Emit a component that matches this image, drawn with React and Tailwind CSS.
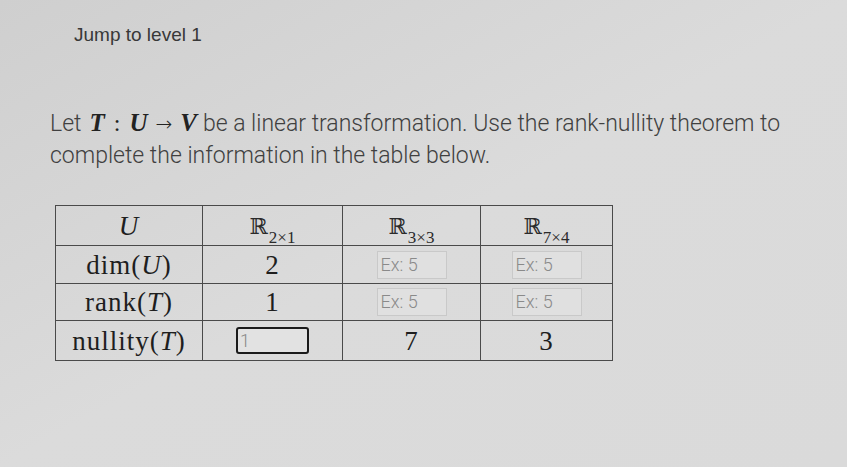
import React from "react";

const serif = "font-['Liberation_Serif',serif]";

function RR({ sub }) {
  return (
    <span className="font-['DejaVu_Serif',serif] text-[22px] text-[#2a2a2a]">
      ℝ<sub className="text-[17px] align-[-5px] tracking-normal font-['Liberation_Serif',serif]">{sub}</sub>
    </span>
  );
}

function Placeholder() {
  return (
    <div className="w-[70px] h-[28px] mx-auto border border-[#c9c9c9] bg-[#e0e0e0] flex items-center px-[3px] text-[18px] tracking-normal text-[#8a8a8a] font-['Roboto',sans-serif] font-light">
      Ex: 5
    </div>
  );
}

export default function App() {
  const cell = "border border-[#4a4a4a] text-center align-middle p-0";
  return (
    <div className="w-[847px] h-[467px] overflow-hidden bg-gradient-to-br from-[#cfcfcf] via-[#dbdbdb] to-[#dadada] text-[#3a3a3a]">
      <div className="pt-[21px] pl-[74px] text-[19px] leading-[28px] font-['Liberation_Sans',sans-serif] text-[#383838]">
        Jump to level 1
      </div>

      <p className="mt-[59px] ml-[50px] w-[780px] text-[23px] leading-[32px] font-['Roboto',sans-serif] font-light text-[#404040]">
        Let
        <span className={`${serif} italic font-bold text-[25px] leading-none text-[#222] ml-[8px]`}>T</span>
        <span className={`${serif} text-[24px] leading-none text-[#222] mx-[9px]`}>:</span>
        <span className={`${serif} italic font-bold text-[25px] leading-none text-[#222]`}>U</span>
        <span className="font-['DejaVu_Sans',sans-serif] text-[20px] leading-none text-[#222] mx-[8px]">→</span>
        <span className={`${serif} italic font-bold text-[25px] leading-none text-[#222] mr-[6px]`}>V</span>
        be a linear transformation. Use the rank-nullity theorem to
        <br />
        complete the information in the table below.
      </p>

      <table className={`mt-[33px] ml-[55px] border-collapse ${serif} text-[27px] leading-[28px] tracking-[1px] text-[#1e1e1e]`}>
        <tbody>
          <tr className="h-[40px]">
            <td className={`${cell} w-[147px] italic`}>U</td>
            <td className={`${cell} w-[140px]`}><RR sub="2×1" /></td>
            <td className={`${cell} w-[138px]`}><RR sub="3×3" /></td>
            <td className={`${cell} w-[132px]`}><RR sub="7×4" /></td>
          </tr>
          <tr className="h-[38px]">
            <td className={cell}>dim(<span className="italic">U</span>)</td>
            <td className={cell}>2</td>
            <td className={cell}><Placeholder /></td>
            <td className={cell}><Placeholder /></td>
          </tr>
          <tr className="h-[37px]">
            <td className={cell}>rank(<span className="italic">T</span>)</td>
            <td className={cell}>1</td>
            <td className={cell}><Placeholder /></td>
            <td className={cell}><Placeholder /></td>
          </tr>
          <tr className="h-[40px]">
            <td className={cell}>nullity(<span className="italic">T</span>)</td>
            <td className={cell}>
              <div className="w-[73px] h-[27px] mx-auto border-2 border-[#1a1a1a] rounded-[3px] bg-[#e2e2e2] flex items-center px-[2px] text-[18px] tracking-normal text-[#888] font-['Roboto',sans-serif] font-light">
                1
              </div>
            </td>
            <td className={cell}>7</td>
            <td className={cell}>3</td>
          </tr>
        </tbody>
      </table>
    </div>
  );
}
